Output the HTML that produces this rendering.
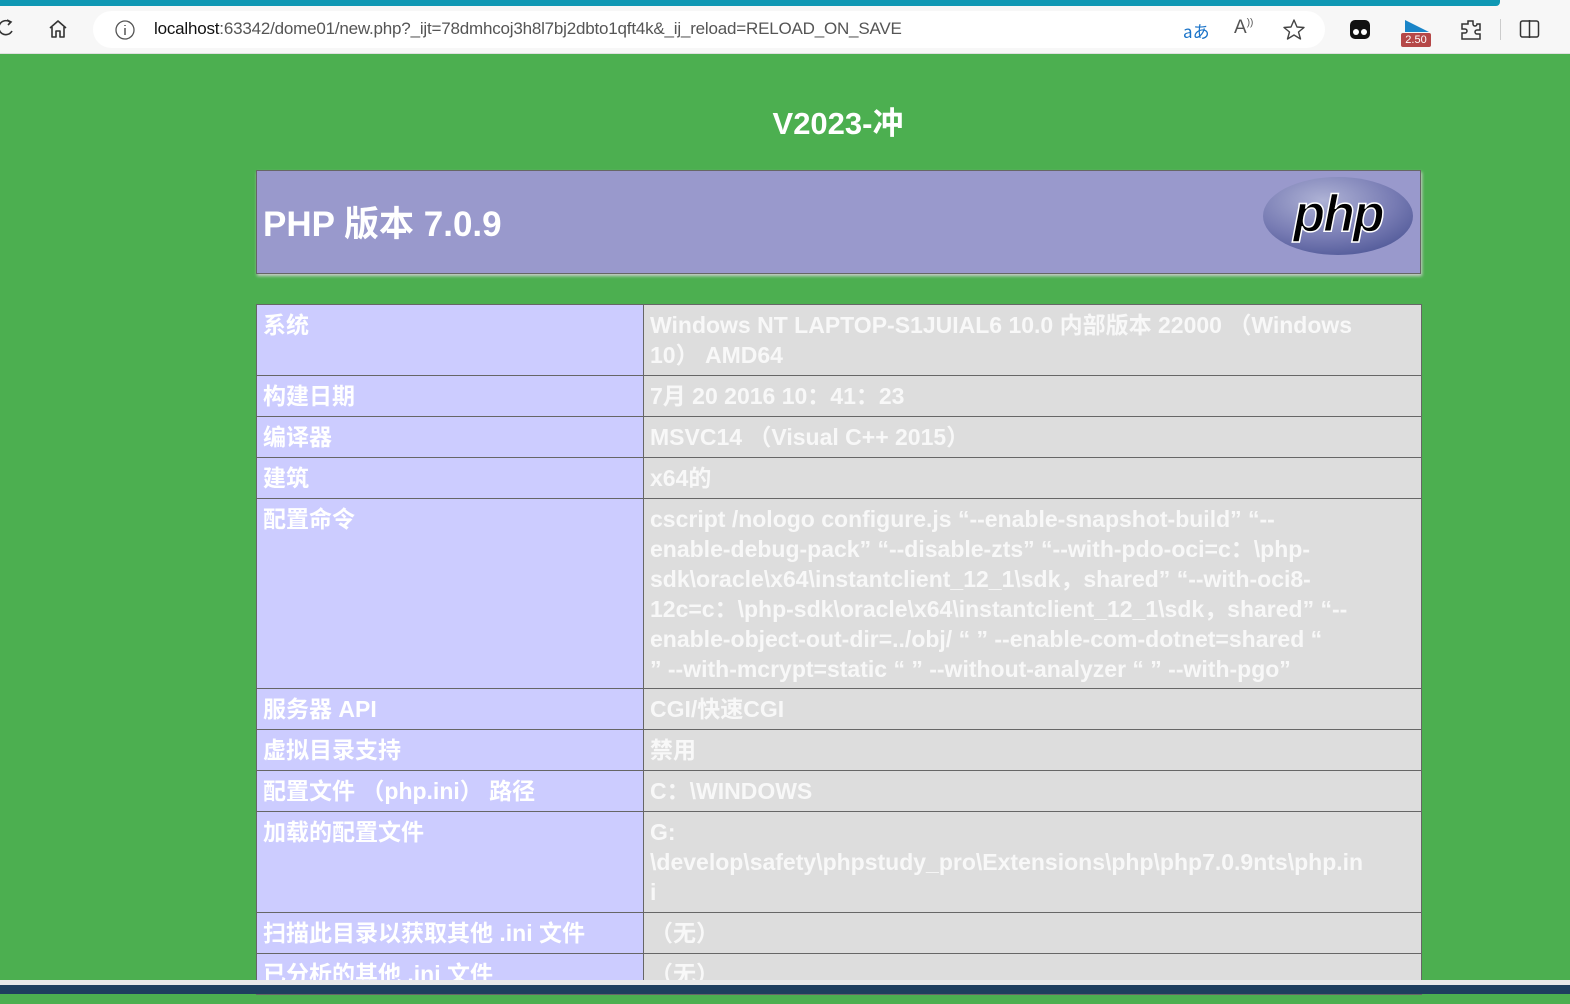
<!DOCTYPE html>
<html><head><meta charset="utf-8"><style>
*{margin:0;padding:0;box-sizing:border-box}
body{width:1570px;height:994px;overflow:hidden;background:#4caf50;font-family:"Liberation Sans","Noto Sans CJK SC",sans-serif;position:relative}
.bar{position:absolute;left:0;top:0;width:1570px;height:54px;background:#f7f7f7;border-bottom:1px solid #e0e0e0}
.teal{position:absolute;left:0;top:0;width:1500px;height:6px;background:#0f98b4;border-radius:0 0 4px 0}
.url{position:absolute;left:93px;top:11px;width:1232px;height:37px;background:#fff;border-radius:19px}
.urltxt{position:absolute;left:154px;top:19px;font-size:17px;color:#555;white-space:nowrap;letter-spacing:-0.2px}
.urltxt b{font-weight:normal;color:#111}
.title{position:absolute;left:0;width:1676px;top:98px;text-align:center;color:#fff;font-weight:bold;font-size:31px}
.head{position:absolute;left:256px;top:170px;width:1165px;height:104px;background:#9999cc;border:1px solid #666;box-shadow:1px 2px 3px #ccc}
.head h1{position:absolute;left:6px;top:25px;color:#fff;font-size:35px;font-weight:bold}
.tbl{position:absolute;left:256px;top:304px;width:1166px;height:700px;border-top:1px solid #666}
.r{position:absolute;left:0;width:1166px;border-bottom:1px solid #666}
.k,.v{position:absolute;top:0;bottom:0;padding:5px 6px;color:#fff;font-weight:bold;font-size:23px;line-height:30px;white-space:nowrap;overflow:hidden}
.k{left:0;width:388px;background:#ccccff;border-left:1px solid #666;border-right:1px solid #666}
.v{left:388px;width:778px;background:#dddddd;border-right:1px solid #666;color:#f8f8f8}
.bot{position:absolute;left:0;top:980px;width:1570px;height:5px;background:#e8e8e8}
.task{position:absolute;left:0;top:985px;width:1570px;height:9px;background:#1e3f5e}
</style></head><body>
<div class="bar"><div class="teal"></div>
<svg style="position:absolute;left:0;top:19px" width="16" height="20"><path d="M10 3 A7 7 0 1 0 12 12" fill="none" stroke="#333" stroke-width="1.6"/><path d="M7 1 L11 3 L8 6" fill="none" stroke="#333" stroke-width="1.6"/></svg>
<svg style="position:absolute;left:47px;top:19px" width="22" height="20"><path d="M3 9 L11 2 L19 9 M5 8 V18 H9 V12 H13 V18 H17 V8" fill="none" stroke="#333" stroke-width="1.6" stroke-linejoin="round"/></svg>
<div class="url"></div>
<svg style="position:absolute;left:114px;top:19px" width="22" height="22"><circle cx="11" cy="11" r="9" fill="none" stroke="#555" stroke-width="1.3"/><path d="M11 9 V16 M11 6 V7" stroke="#555" stroke-width="1.5"/></svg>
<div class="urltxt"><b>localhost</b>:63342/dome01/new.php?_ijt=78dmhcoj3h8l7bj2dbto1qft4k&amp;_ij_reload=RELOAD_ON_SAVE</div>
<div style="position:absolute;left:1183px;top:18px;font-size:17px;color:#1a73c8;font-family:'Noto Sans CJK JP',sans-serif">aあ</div>
<div style="position:absolute;left:1234px;top:17px;font-size:19px;color:#555">A<sup style="font-size:10px">))</sup></div>
<svg style="position:absolute;left:1282px;top:18px" width="24" height="22"><path d="M12 2 L15 9 L22 9.5 L16.5 14 L18.5 21 L12 17 L5.5 21 L7.5 14 L2 9.5 L9 9 Z" fill="none" stroke="#444" stroke-width="1.4" stroke-linejoin="round"/></svg>
<div style="position:absolute;left:1350px;top:20px;width:20px;height:19px;background:#111;border-radius:5px"><div style="position:absolute;left:3px;top:9px;width:6px;height:6px;background:#fff;border-radius:50%"></div><div style="position:absolute;left:11px;top:9px;width:6px;height:6px;background:#fff;border-radius:50%"></div></div>
<svg style="position:absolute;left:1405px;top:20px" width="24" height="16"><path d="M0 0 L24 12 L0 12Z" fill="#1a85c8"/></svg>
<div style="position:absolute;left:1401px;top:33px;width:30px;height:14px;background:#b54848;color:#fff;font-size:11px;text-align:center;line-height:14px;border-radius:2px">2.50</div>
<svg style="position:absolute;left:1459px;top:18px" width="24" height="24"><path d="M9 3 h5 v3 a2 2 0 0 0 4 0 h3 v6 h-3 a2 2 0 0 0 0 4 h3 v5 h-18 v-6 h3 a2 2 0 0 0 0 -4 h-3 v-5 h6z" fill="none" stroke="#333" stroke-width="1.5"/></svg>
<div style="position:absolute;left:1500px;top:19px;width:1px;height:21px;background:#ccc"></div>
<svg style="position:absolute;left:1519px;top:19px" width="22" height="20"><rect x="1.5" y="2" width="18" height="16" rx="2" fill="none" stroke="#333" stroke-width="1.5"/><path d="M10.5 1 V19" stroke="#333" stroke-width="1.5"/></svg>
</div>
<div class="title">V2023-冲</div>
<div class="head"><h1>PHP 版本 7.0.9</h1>
<svg style="position:absolute;left:1005px;top:5px" width="152" height="82"><defs><radialGradient id="g" cx="0.4" cy="0.3" r="0.8"><stop offset="0" stop-color="#aeb2d5"/><stop offset="0.6" stop-color="#777bb3"/><stop offset="1" stop-color="#4c5595"/></radialGradient></defs><ellipse cx="76" cy="40" rx="75" ry="39" fill="url(#g)"/>
<text x="76" y="55" text-anchor="middle" font-family="Liberation Sans" font-weight="bold" font-style="italic" font-size="52" fill="#000" stroke="#fff" stroke-width="1.5" letter-spacing="-2">php</text></svg>
</div>
<div class="tbl">
<div class="r" style="top:0;height:71px"><div class="k">系统</div><div class="v">Windows NT LAPTOP-S1JUIAL6 10.0 内部版本 22000 （Windows<br>10） AMD64</div></div>
<div class="r" style="top:71px;height:41px"><div class="k">构建日期</div><div class="v">7月 20 2016 10：41：23</div></div>
<div class="r" style="top:112px;height:41px"><div class="k">编译器</div><div class="v">MSVC14 （Visual C++ 2015）</div></div>
<div class="r" style="top:153px;height:41px"><div class="k">建筑</div><div class="v">x64的</div></div>
<div class="r" style="top:194px;height:190px"><div class="k">配置命令</div><div class="v">cscript /nologo configure.js “--enable-snapshot-build” “--<br>enable-debug-pack” “--disable-zts” “--with-pdo-oci=c：\php-<br>sdk\oracle\x64\instantclient_12_1\sdk，shared” “--with-oci8-<br>12c=c：\php-sdk\oracle\x64\instantclient_12_1\sdk，shared” “--<br>enable-object-out-dir=../obj/ “ ” --enable-com-dotnet=shared “<br>” --with-mcrypt=static “ ” --without-analyzer “ ” --with-pgo”</div></div>
<div class="r" style="top:384px;height:41px"><div class="k">服务器 API</div><div class="v">CGI/快速CGI</div></div>
<div class="r" style="top:425px;height:41px"><div class="k">虚拟目录支持</div><div class="v">禁用</div></div>
<div class="r" style="top:466px;height:41px"><div class="k">配置文件 （php.ini） 路径</div><div class="v">C：\WINDOWS</div></div>
<div class="r" style="top:507px;height:101px"><div class="k">加载的配置文件</div><div class="v">G:<br>\develop\safety\phpstudy_pro\Extensions\php\php7.0.9nts\php.in<br>i</div></div>
<div class="r" style="top:608px;height:41px"><div class="k">扫描此目录以获取其他 .ini 文件</div><div class="v">（无）</div></div>
<div class="r" style="top:649px;height:41px"><div class="k">已分析的其他 .ini 文件</div><div class="v">（无）</div></div>
</div>
<div class="bot"></div><div class="task"></div>
</body></html>
